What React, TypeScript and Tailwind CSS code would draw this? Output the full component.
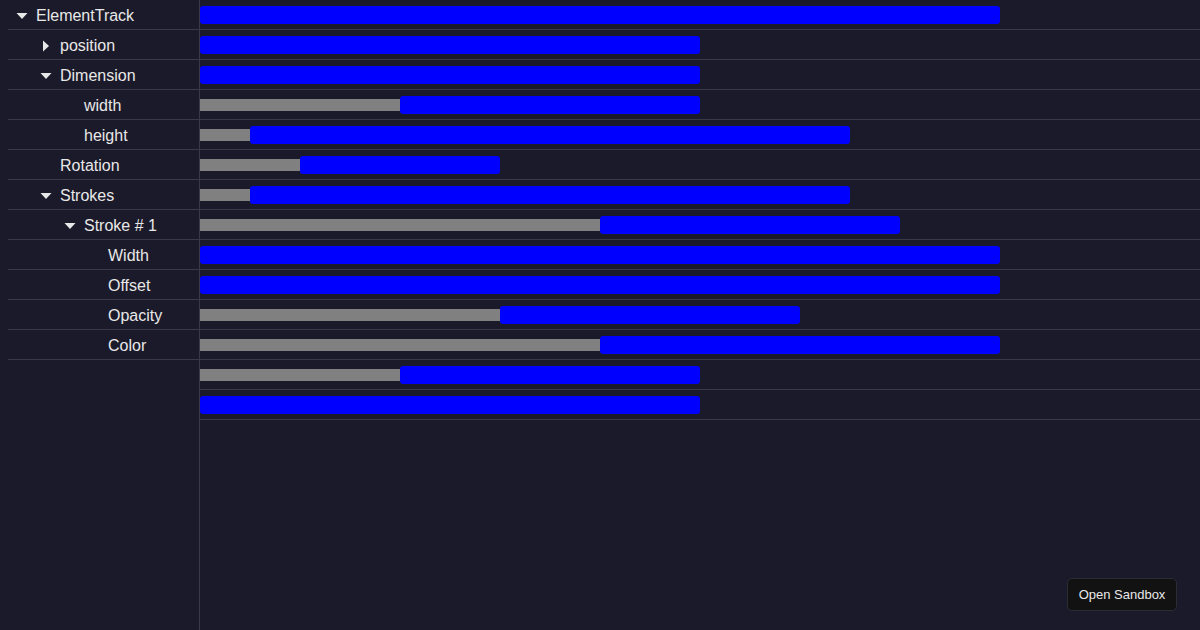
type TreeRow = { label: string; level: number; caret?: "down" | "right" };

const tree: TreeRow[] = [
  { label: "ElementTrack", level: 0, caret: "down" },
  { label: "position", level: 1, caret: "right" },
  { label: "Dimension", level: 1, caret: "down" },
  { label: "width", level: 2 },
  { label: "height", level: 2 },
  { label: "Rotation", level: 1 },
  { label: "Strokes", level: 1, caret: "down" },
  { label: "Stroke # 1", level: 2, caret: "down" },
  { label: "Width", level: 3 },
  { label: "Offset", level: 3 },
  { label: "Opacity", level: 3 },
  { label: "Color", level: 3 },
];

// [gray offset, blue width] in px
const tracks: [number, number][] = [
  [0, 800],
  [0, 500],
  [0, 500],
  [200, 300],
  [50, 600],
  [100, 200],
  [50, 600],
  [400, 300],
  [0, 800],
  [0, 800],
  [300, 300],
  [400, 400],
  [200, 300],
  [0, 500],
];

function Caret({ dir }: { dir: "down" | "right" }) {
  return (
    <svg width="12" height="12" viewBox="0 0 12 12" className="shrink-0">
      {dir === "down" ? (
        <polygon points="0.5,3 11.5,3 6,9" fill="#e8e8e8" />
      ) : (
        <polygon points="3,0.5 9,6 3,11.5" fill="#e8e8e8" />
      )}
    </svg>
  );
}

export default function App() {
  return (
    <div
      className="relative flex min-h-screen bg-[#1b1a2a] text-[#e8e8e8]"
      style={{ fontFamily: '"Liberation Sans", Arial, sans-serif' }}
    >
      {/* Tree panel */}
      <div className="w-[200px] shrink-0 border-r border-[#3a3948] pl-2">
        {tree.map((row) => (
          <div
            key={row.label}
            className="box-border flex h-[30px] items-center gap-2 border-b border-[#3a3948] pt-[2px] text-[16px]"
            style={{ paddingLeft: 8 + row.level * 24 }}
          >
            <span className="flex w-3 shrink-0 items-center">
              {row.caret && <Caret dir={row.caret} />}
            </span>
            <span className="whitespace-nowrap">{row.label}</span>
          </div>
        ))}
      </div>

      {/* Timeline */}
      <div className="flex-1">
        {tracks.map(([gray, blue], i) => (
          <div
            key={i}
            className="box-border flex h-[30px] items-start border-b border-[#3a3948]"
          >
            {gray > 0 && (
              <div className="mt-[9px] h-3 bg-[#808080]" style={{ width: gray }} />
            )}
            <div
              className="mt-[6px] h-[18px] rounded-[3px] bg-[#0000ff]"
              style={{ width: blue }}
            />
          </div>
        ))}
      </div>

      <button className="absolute bottom-[19px] right-[23px] h-[33px] w-[110px] rounded-[5px] border border-[#2c2c35] bg-[#121212] text-[13px] text-[#e8e8e8]">
        Open Sandbox
      </button>
    </div>
  );
}
